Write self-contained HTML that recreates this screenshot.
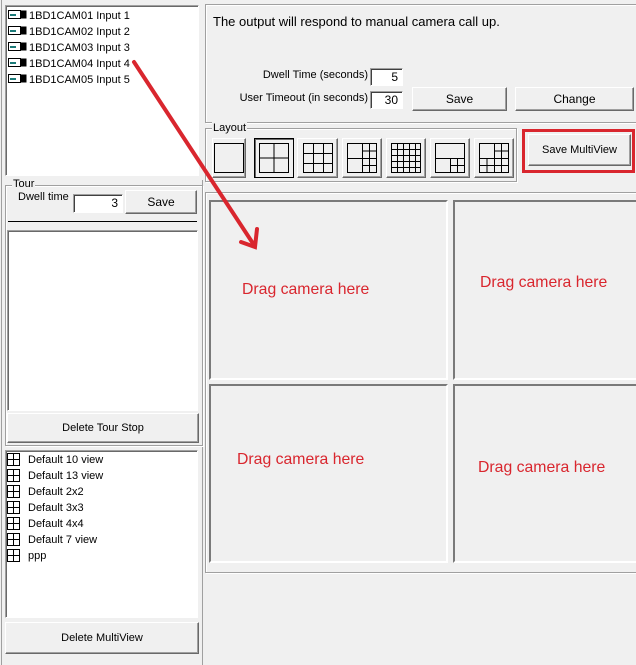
<!DOCTYPE html>
<html><head><style>
*{box-sizing:border-box;margin:0;padding:0}
body{width:636px;height:665px;background:#f0f0f0;position:relative;overflow:hidden;font-family:"Liberation Sans",Arial,sans-serif;font-size:11px;color:#000}
.a{position:absolute}
.sunk{position:absolute;background:#fff;border:1px solid #a0a0a0;border-right-color:#fff;border-bottom-color:#fff;box-shadow:inset 1px 1px 0 #696969}
.btn{position:absolute;background:#f0f0f0;border:1px solid #fff;border-right-color:#696969;border-bottom-color:#696969;box-shadow:inset -1px -1px 0 #a0a0a0;display:flex;align-items:center;justify-content:center;font-size:11px}
.grp{position:absolute;border:1px solid #a0a0a0;box-shadow:1px 1px 0 #fff inset,1px 1px 0 #fff}
.lbl{position:absolute;background:#f0f0f0;padding:0 1px;font-size:11px}
.inp{position:absolute;background:#fff;border:1px solid #a0a0a0;border-right-color:#fff;border-bottom-color:#fff;box-shadow:inset 1px 1px 0 #404040;text-align:right;padding-right:4px;font-size:12px;line-height:16px}
.cell{position:absolute;border:2px solid #7a7a7a;border-right-color:#fff;border-bottom-color:#fff;background:#f0f0f0}
.red{position:absolute;color:#d9262e;font-size:15.8px}
.it{position:absolute;left:8px;height:16px;line-height:16px;font-size:11px;white-space:nowrap}
.lay{position:absolute;top:138px;height:40px}
</style></head><body>

<div class="a" style="left:1px;top:0;width:1px;height:665px;background:#a0a0a0"></div>
<div class="a" style="left:202px;top:180px;width:1px;height:485px;background:#a0a0a0"></div>

<div class="sunk" style="left:5px;top:5px;width:194px;height:171px"></div>
<svg class="a" style="left:8px;top:10px" width="20" height="80">
<g fill="none" stroke="#000">
<rect x="0.5" y="0.5" width="12" height="8" fill="#fff"/><rect x="2" y="4" width="6" height="2" fill="#1b7a78" stroke="none"/><rect x="13" y="1" width="5" height="7" fill="#000"/>
<rect x="0.5" y="16.5" width="12" height="8" fill="#fff"/><rect x="2" y="20" width="6" height="2" fill="#1b7a78" stroke="none"/><rect x="13" y="17" width="5" height="7" fill="#000"/>
<rect x="0.5" y="32.5" width="12" height="8" fill="#fff"/><rect x="2" y="36" width="6" height="2" fill="#1b7a78" stroke="none"/><rect x="13" y="33" width="5" height="7" fill="#000"/>
<rect x="0.5" y="48.5" width="12" height="8" fill="#fff"/><rect x="2" y="52" width="6" height="2" fill="#1b7a78" stroke="none"/><rect x="13" y="49" width="5" height="7" fill="#000"/>
<rect x="0.5" y="64.5" width="12" height="8" fill="#fff"/><rect x="2" y="68" width="6" height="2" fill="#1b7a78" stroke="none"/><rect x="13" y="65" width="5" height="7" fill="#000"/>
</g></svg>
<div class="it" style="left:29px;top:8px">1BD1CAM01 Input 1</div>
<div class="it" style="left:29px;top:24px">1BD1CAM02 Input 2</div>
<div class="it" style="left:29px;top:40px">1BD1CAM03 Input 3</div>
<div class="it" style="left:29px;top:56px">1BD1CAM04 Input 4</div>
<div class="it" style="left:29px;top:72px">1BD1CAM05 Input 5</div>

<div class="grp" style="left:5px;top:185px;width:198px;height:261px"></div>
<div class="lbl" style="left:12px;top:178px">Tour</div>
<div class="a" style="left:18px;top:191px">Dwell time</div>
<div class="inp" style="left:73px;top:194px;width:50px;height:19px">3</div>
<div class="btn" style="left:125px;top:190px;width:72px;height:24px;font-size:12px">Save</div>
<div class="a" style="left:8px;top:221px;width:189px;height:1px;background:#000"></div>
<div class="sunk" style="left:7px;top:230px;width:191px;height:181px"></div>
<div class="btn" style="left:7px;top:413px;width:192px;height:30px">Delete Tour Stop</div>

<div class="sunk" style="left:5px;top:450px;width:193px;height:168px"></div>
<svg class="a" style="left:7px;top:453px" width="14" height="112"><g fill="none" stroke="#000">
<rect x="0.5" y="0.5" width="12" height="12"/><path d="M6.5 0v13M0 6.5h13"/>
<rect x="0.5" y="16.5" width="12" height="12"/><path d="M6.5 16v13M0 22.5h13"/>
<rect x="0.5" y="32.5" width="12" height="12"/><path d="M6.5 32v13M0 38.5h13"/>
<rect x="0.5" y="48.5" width="12" height="12"/><path d="M6.5 48v13M0 54.5h13"/>
<rect x="0.5" y="64.5" width="12" height="12"/><path d="M6.5 64v13M0 70.5h13"/>
<rect x="0.5" y="80.5" width="12" height="12"/><path d="M6.5 80v13M0 86.5h13"/>
<rect x="0.5" y="96.5" width="12" height="12"/><path d="M6.5 96v13M0 102.5h13"/>
</g></svg>
<div class="it" style="left:28px;top:452px">Default 10 view</div>
<div class="it" style="left:28px;top:468px">Default 13 view</div>
<div class="it" style="left:28px;top:484px">Default 2x2</div>
<div class="it" style="left:28px;top:500px">Default 3x3</div>
<div class="it" style="left:28px;top:516px">Default 4x4</div>
<div class="it" style="left:28px;top:532px">Default 7 view</div>
<div class="it" style="left:28px;top:548px">ppp</div>
<div class="btn" style="left:5px;top:622px;width:194px;height:32px">Delete MultiView</div>

<div class="grp" style="left:205px;top:4px;width:433px;height:119px"></div>
<div class="a" style="left:213px;top:14px;font-size:13px">The output will respond to manual camera call up.</div>
<div class="a" style="left:200px;top:69px;width:168px;text-align:right">Dwell Time (seconds)</div>
<div class="inp" style="left:370px;top:68px;width:33px;height:18px">5</div>
<div class="a" style="left:200px;top:92px;width:168px;text-align:right">User Timeout (in seconds)</div>
<div class="inp" style="left:370px;top:91px;width:33px;height:18px">30</div>
<div class="btn" style="left:412px;top:87px;width:95px;height:24px;font-size:12px">Save</div>
<div class="btn" style="left:515px;top:87px;width:119px;height:24px;font-size:12px">Change</div>

<div class="grp" style="left:205px;top:128px;width:312px;height:54px"></div>
<div class="lbl" style="left:212px;top:122px">Layout</div>
<div class="btn lay" style="left:212px;width:34px"><svg width="30" height="30"><rect x=".5" y=".5" width="29" height="29" fill="none" stroke="#000"/></svg></div>
<div class="btn lay" style="left:254px;width:40px;border:1px solid #000;box-shadow:inset 1px 1px 0 #696969"><svg width="30" height="30" fill="none" stroke="#000"><rect x=".5" y=".5" width="29" height="29"/><path d="M15 0v30M0 15h30"/></svg></div>
<div class="btn lay" style="left:297px;width:41px"><svg width="30" height="30" fill="none" stroke="#000"><rect x=".5" y=".5" width="29" height="29"/><path d="M10.5 0v30M20.5 0v30M0 10.5h30M0 20.5h30"/></svg></div>
<div class="btn lay" style="left:342px;width:40px"><svg width="30" height="30" fill="none" stroke="#000"><rect x=".5" y=".5" width="29" height="29"/><path d="M15.5 0v30M22.5 0v30M0 15.5h30M15 8h15M15 22.5h15"/></svg></div>
<div class="btn lay" style="left:386px;width:40px"><svg width="30" height="30" fill="none" stroke="#000"><rect x=".5" y=".5" width="29" height="29"/><path d="M6.5 0v30M12.5 0v30M18.5 0v30M24.5 0v30M0 6.5h30M0 12.5h30M0 18.5h30M0 24.5h30"/></svg></div>
<div class="btn lay" style="left:430px;width:40px"><svg width="30" height="30" fill="none" stroke="#000"><rect x=".5" y=".5" width="29" height="29"/><path d="M15.5 15v15M22.5 15v15M0 15.5h30M15 22.5h15"/></svg></div>
<div class="btn lay" style="left:474px;width:40px"><svg width="30" height="30" fill="none" stroke="#000"><rect x=".5" y=".5" width="29" height="29"/><path d="M15.5 0v30M22.5 0v30M8 15v15M15 8h15M0 15.5h30M0 22.5h30"/></svg></div>

<div class="a" style="left:522px;top:129px;width:113px;height:44px;border:3px solid #d9262e"></div>
<div class="btn" style="left:528px;top:134px;width:103px;height:32px">Save MultiView</div>

<div class="grp" style="left:205px;top:192px;width:433px;height:381px"></div>
<div class="cell" style="left:209px;top:200px;width:239px;height:180px"></div>
<div class="cell" style="left:453px;top:200px;width:185px;height:180px"></div>
<div class="cell" style="left:209px;top:384px;width:239px;height:179px"></div>
<div class="cell" style="left:453px;top:384px;width:185px;height:179px"></div>
<div class="red" style="left:242px;top:281px">Drag camera here</div>
<div class="red" style="left:480px;top:274px">Drag camera here</div>
<div class="red" style="left:237px;top:451px">Drag camera here</div>
<div class="red" style="left:478px;top:459px">Drag camera here</div>

<svg class="a" style="left:0;top:0" width="636" height="665"><g stroke="#d9262e" stroke-width="4" stroke-linecap="round" fill="none">
<path d="M134 62L254 245"/><path d="M241 242L255 247L257 229"/></g></svg>
</body></html>
